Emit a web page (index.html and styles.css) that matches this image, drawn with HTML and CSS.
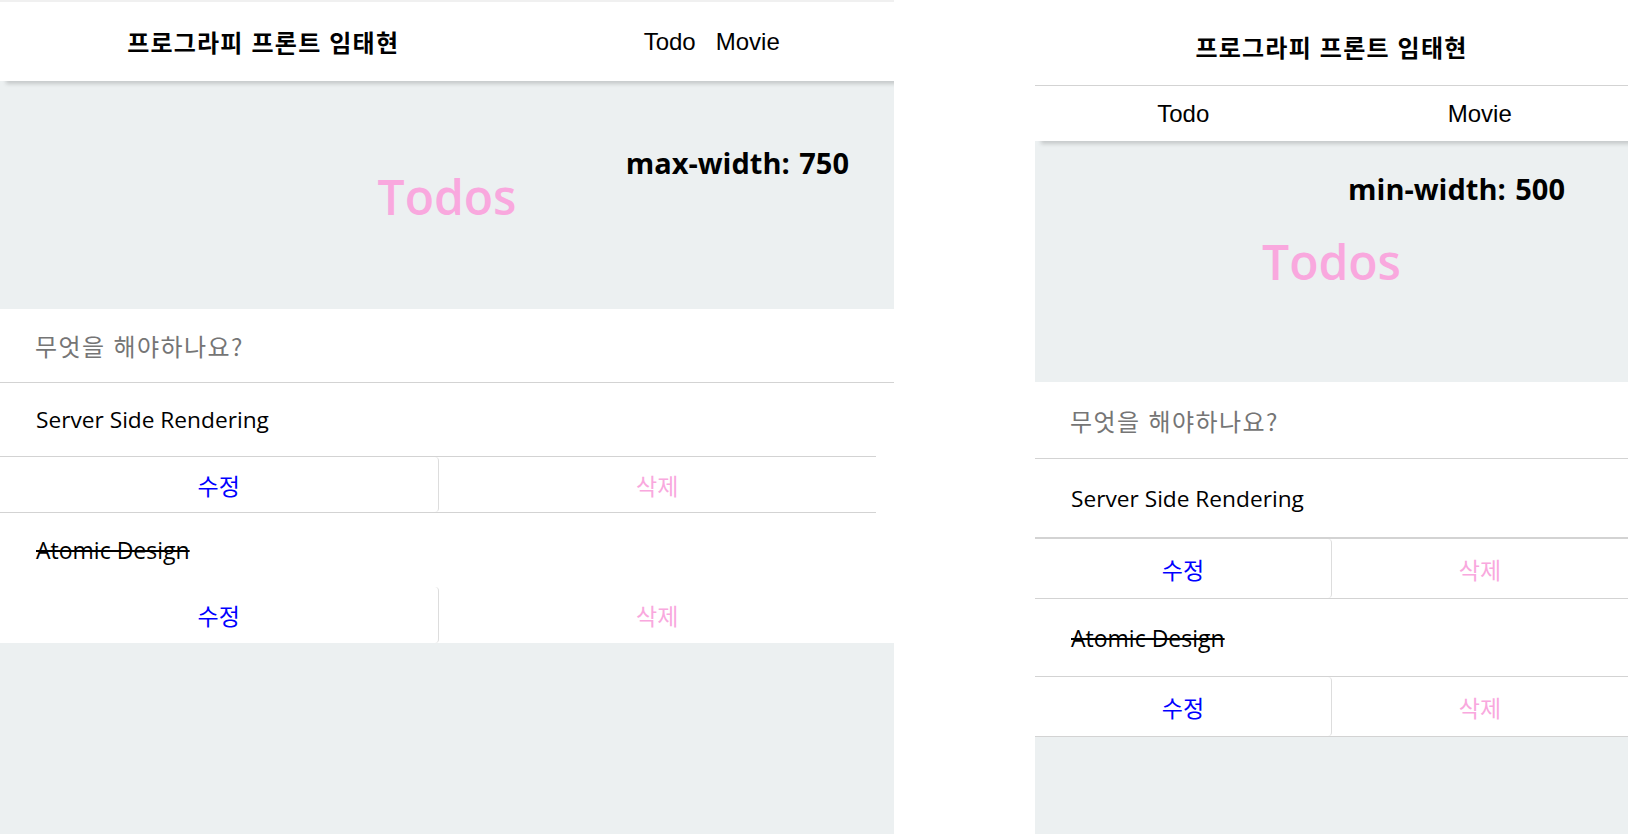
FILE: index.html
```html
<!DOCTYPE html>
<html lang="ko">
<head>
<meta charset="utf-8">
<title>Todos</title>
<link rel="stylesheet" href="styles.css">
</head>
<body>
<div class="screens">
  <section class="screen screen--wide">
    <header class="topbar topbar--row">
      <h1 class="brand">프로그라피 프론트 임태현</h1>
      <nav class="menu">
        <a class="menu-link" href="#todo">Todo</a>
        <a class="menu-link" href="#movie">Movie</a>
      </nav>
    </header>
    <div class="hero">
      <span class="query">max-width: 750</span>
      <h2 class="hero-title">Todos</h2>
    </div>
    <div class="composer">
      <input class="composer-input" type="text" placeholder="무엇을 해야하나요?">
    </div>
    <ul class="todos">
      <li class="todo">
        <div class="todo-text">Server Side Rendering</div>
        <div class="todo-actions">
          <button class="action action--edit">수정</button>
          <button class="action action--delete">삭제</button>
        </div>
      </li>
      <li class="todo todo--plain">
        <div class="todo-text todo-text--done">Atomic Design</div>
        <div class="todo-actions">
          <button class="action action--edit">수정</button>
          <button class="action action--delete">삭제</button>
        </div>
      </li>
    </ul>
  </section>

  <section class="screen screen--narrow">
    <header class="topbar topbar--stack">
      <div class="brand-bar">
        <h1 class="brand">프로그라피 프론트 임태현</h1>
      </div>
      <nav class="menu">
        <a class="menu-link" href="#todo">Todo</a>
        <a class="menu-link" href="#movie">Movie</a>
      </nav>
    </header>
    <div class="hero">
      <span class="query">min-width: 500</span>
      <h2 class="hero-title">Todos</h2>
    </div>
    <div class="composer">
      <input class="composer-input" type="text" placeholder="무엇을 해야하나요?">
    </div>
    <ul class="todos">
      <li class="todo todo--first">
        <div class="todo-text">Server Side Rendering</div>
        <div class="todo-actions">
          <button class="action action--edit">수정</button>
          <button class="action action--delete">삭제</button>
        </div>
      </li>
      <li class="todo">
        <div class="todo-text todo-text--done">Atomic Design</div>
        <div class="todo-actions">
          <button class="action action--edit">수정</button>
          <button class="action action--delete">삭제</button>
        </div>
      </li>
    </ul>
  </section>
</div>
</body>
</html>
```

FILE: styles.css
```css
* {
  box-sizing: border-box;
  margin: 0;
  padding: 0;
}

html,
body {
  background: #fff;
}

body {
  font-family: "Open Sans", "Noto Sans CJK KR", sans-serif;
  color: #000;
}

.screens {
  display: flex;
  gap: 141px;
  height: 834px;
  overflow: hidden;
}

.screen {
  display: flex;
  flex-direction: column;
  height: 834px;
  background: #ecf0f1;
  overflow: hidden;
}

.screen--wide {
  width: 894px;
  border-top: 2px solid #f0f0f0;
}

.screen--narrow {
  width: 593px;
}

/* header */
.topbar {
  position: relative;
  z-index: 1;
  background: #fff;
  box-shadow: 6px 3px 4px rgba(0, 0, 0, 0.16);
}

.topbar--row {
  height: 79px;
  display: flex;
  align-items: center;
  justify-content: space-around;
  padding-left: 13px;
}

.topbar--row .menu {
  margin-left: 16px;
  gap: 20px;
}

.brand {
  font-family: "Noto Sans CJK KR", sans-serif;
  font-weight: 700;
  font-size: 24px;
  letter-spacing: 1.2px;
  line-height: 1;
}

.menu {
  display: flex;
}

.menu-link {
  font-family: "Liberation Sans", Arial, sans-serif;
  font-size: 24px;
  color: #000;
  text-decoration: none;
}

.brand-bar {
  height: 86px;
  border-bottom: 1px solid #d3d3d3;
  display: flex;
  align-items: center;
  justify-content: center;
  padding-top: 8px;
}

.topbar--stack .menu {
  height: 55px;
}

.topbar--stack .menu-link {
  flex: 1;
  display: flex;
  align-items: center;
  justify-content: center;
}

/* hero */
.hero {
  position: relative;
  display: flex;
  align-items: center;
  justify-content: center;
}

.screen--wide .hero {
  height: 228px;
}

.screen--narrow .hero {
  height: 241px;
}

.query {
  position: absolute;
  font-weight: 700;
  font-size: 29px;
  line-height: 1;
  word-spacing: 2px;
}

.screen--wide .query {
  top: 67px;
  right: 45px;
}

.screen--narrow .query {
  top: 33px;
  right: 63px;
}

.hero-title {
  font-size: 48px;
  font-weight: 600;
  line-height: 1;
  color: #f9a8de;
}

.screen--wide .hero-title {
  margin-top: 3px;
}

/* composer */
.composer {
  display: flex;
  align-items: center;
  background: #fff;
  border-bottom: 1px solid #d3d3d3;
  padding-left: 35px;
}

.screen--wide .composer {
  height: 74px;
}

.screen--narrow .composer {
  height: 77px;
}

.composer-input {
  width: 100%;
  border: 0;
  outline: 0;
  background: transparent;
  font: 400 24px "Noto Sans CJK KR", sans-serif;
  letter-spacing: 1.4px;
  color: #000;
}

.composer-input::placeholder {
  color: #757575;
}

/* list */
.todos {
  list-style: none;
  background: #fff;
}

.screen--wide .todos {
  padding-right: 18px;
}

.todo-text {
  display: flex;
  align-items: center;
  padding-left: 36px;
  font-size: 22.7px;
  border-bottom: 1px solid #d3d3d3;
}

.todo-text--done {
  font-size: 23px;
  text-decoration: line-through;
  text-decoration-thickness: 2px;
}

.todo-actions {
  display: flex;
  border-bottom: 1px solid #d3d3d3;
}

.screen--wide .todo-text {
  height: 74px;
}

.screen--wide .todo-actions {
  height: 56px;
}

.todo--plain .todo-text,
.todo--plain .todo-actions {
  border-bottom: 0;
}

.screen--narrow .todo-text {
  height: 78px;
}

.screen--narrow .todo--first .todo-text {
  height: 80px;
  border-bottom-width: 2px;
}

.screen--narrow .todo-actions {
  height: 60px;
}

.action {
  flex: 1;
  border: 0;
  background: #fff;
  font: 400 23px "Noto Sans CJK KR", sans-serif;
  cursor: pointer;
}

.action--edit {
  color: #0000ff;
  border-right: 1px solid #dddddd;
  border-radius: 4px;
}

.action--delete {
  color: #f9a8de;
}
```
